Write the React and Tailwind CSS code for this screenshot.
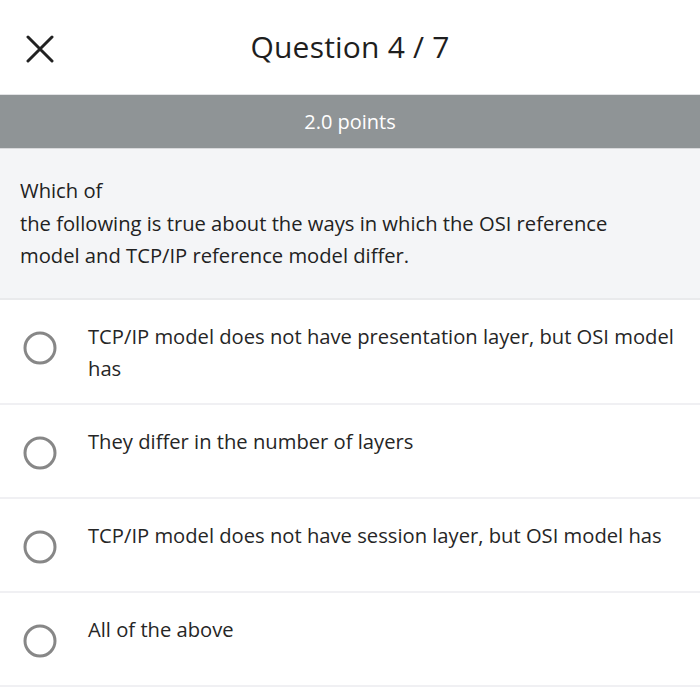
import React from "react";

const options = [
    "TCP/IP model does not have presentation layer, but OSI model has",
    "They differ in the number of layers",
    "TCP/IP model does not have session layer, but OSI model has",
    "All of the above"
];

const Radio = () => (
    <svg width="34" height="34" viewBox="0 0 34 34" className="shrink-0">
        <circle cx="17" cy="17" r="15" fill="none" stroke="#878787" strokeWidth="3" />
    </svg>
);

export default function App() {
    return (
        <div className="w-[700px] min-h-[691px] bg-white text-[#222]" style={{ fontFamily: '"Open Sans", "Noto Sans", sans-serif' }}>
            <div className="relative flex h-[95px] items-center justify-center border-b border-[#e2e3e5]">
                <button className="absolute left-[26px] top-[35px]">
                    <svg width="28" height="28" viewBox="0 0 28 28">
                        <path d="M2 2 L26 26 M26 2 L2 26" stroke="#222" strokeWidth="3" strokeLinecap="round" />
                    </svg>
                </button>
                <h1 className="text-[30px] font-normal leading-none tracking-[0.2px] text-[#1e1e1e]">Question 4 / 7</h1>
            </div>

            <div className="flex h-[54px] items-center justify-center border-b border-[#d8d9db] bg-[#8f9496] text-[20px] text-white">
                2.0 points
            </div>

            <div className="border-b-2 border-[#e9eaec] bg-[#f4f5f7] pb-[26px] pl-5 pr-[60px] pt-[25px] text-[20.2px] leading-[32.5px] text-[#222]">
                <p>Which of</p>
                <p>the following is true about the ways in which the OSI reference model and TCP/IP reference model differ.</p>
            </div>

            <div>
                {options.map((opt) => (
                    <div key={opt} className="flex min-h-[94px] items-start border-b-2 border-[#f0f0f3] pb-[19px] pl-[23px] pr-4 pt-[31px]">
                        <Radio />
                        <p className="ml-[31px] -mt-[11px] text-[20.2px] leading-[32px] text-[#262626]">{opt}</p>
                    </div>
                ))}
            </div>
        </div>
    );
}
